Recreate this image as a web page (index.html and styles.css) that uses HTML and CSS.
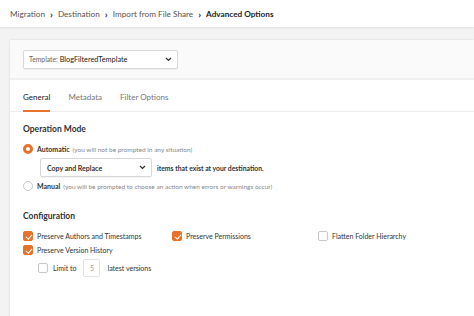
FILE: index.html
```html
<html>
    <head>
        <title>Advanced Options</title>
        <link rel="stylesheet" href="styles.css">
    </head>
    <body>
        <div class="topbar">
            <span class="crumb">Migration</span>
            <span class="sep">&#x203A;</span>
            <span class="crumb">Destination</span>
            <span class="sep">&#x203A;</span>
            <span class="crumb">Import from File Share</span>
            <span class="sep">&#x203A;</span>
            <span class="crumb current">Advanced Options</span>
        </div>

        <div class="page">
            <div class="card">
                <div class="card-head">
                    <div class="select template">
                        <span class="muted">Template:</span>&nbsp;<span>BlogFilteredTemplate</span>
                        <svg class="chev" width="7" height="5" viewBox="0 0 7 5"><path d="M1 1 L3.5 3.5 L6 1" fill="none" stroke="#333" stroke-width="1.2"/></svg>
                    </div>
                </div>

                <div class="tabs">
                    <span class="tab active">General</span>
                    <span class="tab">Metadata</span>
                    <span class="tab">Filter Options</span>
                </div>

                <div class="section">
                    <h3>Operation Mode</h3>
                    <div class="option">
                        <span class="radio on"></span>
                        <b>Automatic</b><span class="hint">(you will not be prompted in any situation)</span>
                    </div>
                    <div class="option sub">
                        <div class="select action">
                            <span>Copy and Replace</span>
                            <svg class="chev" width="7" height="5" viewBox="0 0 7 5"><path d="M1 1 L3.5 3.5 L6 1" fill="none" stroke="#333" stroke-width="1.2"/></svg>
                        </div>
                        <span class="strong">items that exist at your destination.</span>
                    </div>
                    <div class="option">
                        <span class="radio"></span>
                        <b>Manual</b><span class="hint">(you will be prompted to choose an action when errors or warnings occur)</span>
                    </div>
                </div>

                <div class="section config">
                    <h3>Configuration</h3>
                    <div class="grid">
                        <div class="option"><span class="check on"></span>Preserve Authors and Timestamps</div>
                        <div class="option"><span class="check on"></span>Preserve Permissions</div>
                        <div class="option"><span class="check"></span>Flatten Folder Hierarchy</div>
                        <div class="option"><span class="check on"></span>Preserve Version History</div>
                    </div>
                    <div class="option limit">
                        <span class="check"></span>Limit to
                        <span class="num">5</span>
                        latest versions
                    </div>
                </div>
            </div>
        </div>
    </body>
</html>
```

FILE: styles.css
```css
body {
    margin: 0;
    width: 474px;
    height: 316px;
    overflow: hidden;
    font-family: Lato, sans-serif;
    font-size: 7px;
    color: #333;
    background-color: #f3f3f4;
}

/* breadcrumb bar */
.topbar {
    height: 27px;
    display: flex;
    align-items: center;
    gap: 4px;
    padding-left: 10px;
    background-color: #fff;
    box-shadow: 0 1px 2px rgba(0,0,0,0.08);
    font-size: 8.2px;
    color: #555;
}
.topbar .sep {
    font-weight: 700;
    color: #333;
    font-size: 10px;
    padding: 0 1px;
}
.topbar .current {
    color: #222;
    font-weight: 700;
}

.page {
    padding: 13px 0 0 10px;
}

.card {
    background-color: #fff;
    height: 280px;
    box-shadow: 0 0 2px rgba(0,0,0,0.12);
}

.card-head {
    height: 38px;
    padding-left: 13px;
    display: flex;
    align-items: center;
    background-color: #fafafb;
    border-bottom: 2px solid #f0f0f1;
}

.select {
    display: flex;
    align-items: center;
    border: 1px solid #d8d8d8;
    border-radius: 2px;
    background-color: #fff;
    box-shadow: 0 1px 1px rgba(0,0,0,0.05);
    padding: 0 5px;
    box-sizing: border-box;
}
.select .chev {
    margin-left: auto;
}
.template {
    width: 155px;
    height: 19px;
    color: #222;
    font-size: 7.3px;
}
.template .muted {
    color: #666;
    font-size: 6.8px;
}

.tabs {
    display: flex;
    gap: 18px;
    height: 31px;
    padding-left: 13px;
    border-bottom: 1px solid #eeeeef;
    font-size: 8px;
    color: #777;
}
.tab {
    display: flex;
    align-items: center;
    border-bottom: 2px solid transparent;
    margin-bottom: -1px;
    padding-top: 4px;
}
.tab.active {
    color: #222;
    border-bottom-color: #e8722c;
}

.section {
    padding: 12px 0 0 13px;
}
.section.config {
    padding-top: 18px;
}
.section h3 {
    margin: 0 0 8px 0;
    font-size: 8.5px;
    font-weight: 700;
    color: #333;
}

.option {
    display: flex;
    align-items: center;
    height: 14px;
    gap: 4px;
    color: #333;
}
.option b {
    font-weight: 700;
}
.option .hint {
    color: #888;
    font-size: 6.5px;
    margin-left: -1px;
}
.option.sub {
    height: 23px;
    padding-left: 17px;
    gap: 5px;
}
.option .strong {
    font-weight: 700;
    font-size: 6.8px;
}
.action {
    width: 112px;
    height: 19px;
    font-weight: 700;
    padding-left: 6px;
}

.radio {
    width: 10px;
    height: 10px;
    border-radius: 50%;
    border: 1px solid #c8c8c8;
    box-sizing: border-box;
}
.radio.on {
    border: 3px solid #e8722c;
}

.check {
    width: 10px;
    height: 10px;
    border-radius: 2px;
    border: 1px solid #c8c8c8;
    box-sizing: border-box;
    position: relative;
}
.check.on {
    background-color: #e8722c;
    border-color: #e8722c;
}
.check.on::after {
    content: "";
    position: absolute;
    left: 2.5px;
    top: 0.5px;
    width: 2.5px;
    height: 5px;
    border: solid #fff;
    border-width: 0 1.3px 1.3px 0;
    transform: rotate(40deg);
}

.grid {
    display: grid;
    grid-template-columns: 149px 146px 149px;
}

.limit {
    height: 22px;
    padding-left: 15px;
    gap: 5px;
}
.num {
    width: 17px;
    height: 18px;
    border: 1px solid #e2e2e2;
    border-radius: 2px;
    box-sizing: border-box;
    display: flex;
    align-items: center;
    justify-content: center;
    color: #999;
    margin: 0 2px;
}
```
